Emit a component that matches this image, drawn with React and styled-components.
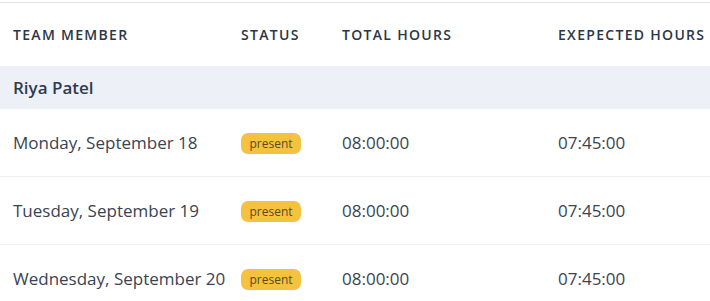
import React from "react";
import styled, { createGlobalStyle } from "styled-components";

const Global = createGlobalStyle`
  html, body { margin: 0; padding: 0; background: #ffffff; }
  body { font-family: "Open Sans", "Noto Sans", sans-serif; }
`;

const Table = styled.div`
  margin-top: 2px;
  border-top: 1px solid #e3e3e3;
  width: 710px;
  overflow: hidden;
`;

const Row = styled.div`
  display: grid;
  grid-template-columns: 228px 101px 216px 1fr;
  align-items: center;
  height: ${(p) => p.$h}px;
  background: ${(p) => p.$bg || "transparent"};
  border-bottom: ${(p) => (p.$line ? "1px solid #eef0f4" : "none")};
  box-sizing: content-box;
`;

const HeadCell = styled.div`
  padding-left: 13px;
  font-size: 14px;
  font-weight: 600;
  letter-spacing: 1.3px;
  text-transform: uppercase;
  color: #2b3648;
  white-space: nowrap;
`;

const Cell = styled.div`
  padding-left: 13px;
  font-size: 17px;
  font-weight: ${(p) => (p.$bold ? 600 : 400)};
  color: ${(p) => (p.$bold ? "#2f3b4d" : "#3a4352")};
  white-space: nowrap;
`;

const Badge = styled.span`
  display: inline-flex;
  align-items: center;
  justify-content: center;
  width: 60px;
  height: 21px;
  border-radius: 7px;
  background: #f5c240;
  color: #5b4a1c;
  font-size: 12px;
  font-weight: 400;
  box-sizing: border-box;
  vertical-align: middle;
`;

const days = [
  "Monday, September 18",
  "Tuesday, September 19",
  "Wednesday, September 20",
];

export default function App() {
  return (
    <>
      <Global />
      <Table>
        <Row $h={63}>
          <HeadCell>Team Member</HeadCell>
          <HeadCell>Status</HeadCell>
          <HeadCell>Total Hours</HeadCell>
          <HeadCell>Exepected Hours</HeadCell>
        </Row>
        <Row $h={43} $bg="#edf1f7">
          <Cell $bold>Riya Patel</Cell>
        </Row>
        {days.map((d, i) => (
          <Row key={d} $h={67} $line={i < days.length - 1}>
            <Cell>{d}</Cell>
            <Cell>
              <Badge>present</Badge>
            </Cell>
            <Cell>08:00:00</Cell>
            <Cell>07:45:00</Cell>
          </Row>
        ))}
      </Table>
    </>
  );
}
